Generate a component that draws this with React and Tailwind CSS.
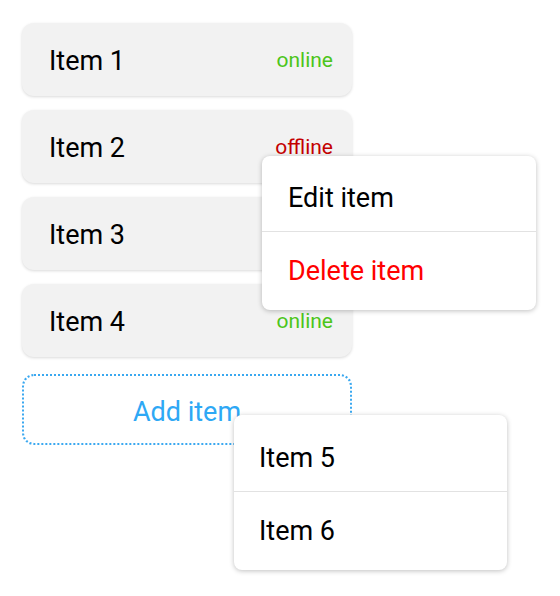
const items = [
    { name: "Item 1", status: "online" },
    { name: "Item 2", status: "offline" },
    { name: "Item 3", status: "" },
    { name: "Item 4", status: "online" },
]

const App = () => {
    return (
        <section className="relative w-[560px] h-[596px] bg-white font-['Roboto',sans-serif]">
            <div className="flex flex-col gap-[14px] pt-[23px] pl-[22px] w-[352px]">
                {items.map((item) => (
                    <div key={item.name} className="flex items-center justify-between h-[73px] pl-[27px] pr-[19px] pt-[3px] bg-[#f2f2f2] rounded-[12px] shadow-[0_1px_3px_rgba(0,0,0,0.15)]">
                        <p className="text-[27px] text-black">{item.name}</p>
                        <p className={item.status === "online" ? "text-[21px] text-[#4cc51a]" : "text-[21px] text-[#c40000]"}>{item.status}</p>
                    </div>
                ))}
                <div className="flex items-center justify-center h-[71px] mt-[3px] pt-[5px] border-2 border-dotted border-[#3aa8f0] rounded-[12px]">
                    <p className="text-[27px] text-[#2ea8f5]">Add item</p>
                </div>
            </div>

            <div className="absolute left-[262px] top-[156px] w-[274px] bg-white rounded-[8px] shadow-[0_1px_5px_rgba(0,0,0,0.25)]">
                <div className="h-[76px] flex items-center px-[26px] pt-[10px] border-b border-[#e2e2e2]">
                    <p className="text-[27px] text-black">Edit item</p>
                </div>
                <div className="h-[78px] flex items-center px-[26px]">
                    <p className="text-[27px] text-[#ff0000]">Delete item</p>
                </div>
            </div>

            <div className="absolute left-[234px] top-[415px] w-[273px] bg-white rounded-[8px] shadow-[0_1px_5px_rgba(0,0,0,0.25)]">
                <div className="h-[77px] flex items-center px-[25px] pt-[11px] border-b border-[#e2e2e2]">
                    <p className="text-[27px] text-black">Item 5</p>
                </div>
                <div className="h-[78px] flex items-center px-[25px]">
                    <p className="text-[27px] text-black">Item 6</p>
                </div>
            </div>
        </section>
    )
}

export default App
